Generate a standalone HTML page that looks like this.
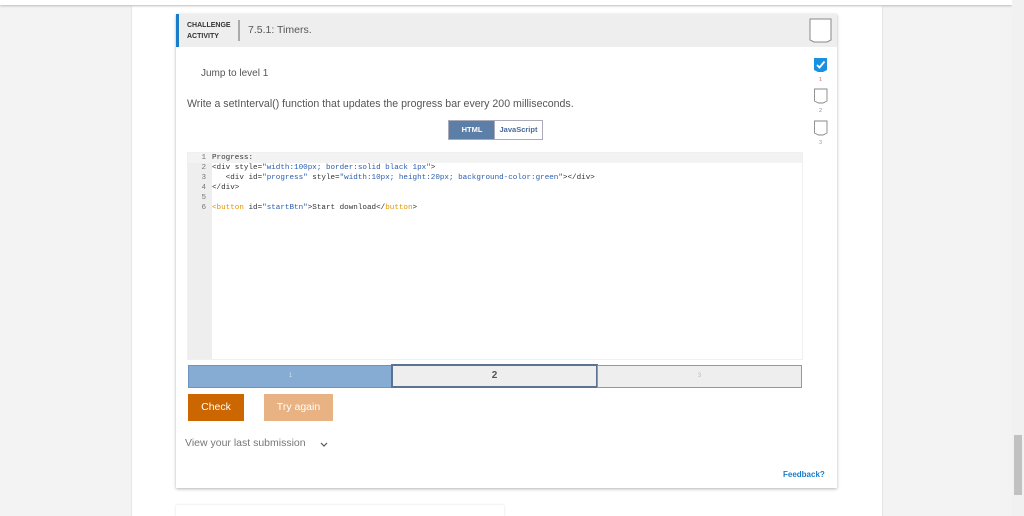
<!DOCTYPE html>
<html><head><style>
body{margin:0;width:1024px;height:516px;overflow:hidden;background:#f3f3f3;font-family:"Liberation Sans",sans-serif;position:relative}
.main{position:absolute;left:131px;top:0;width:750px;height:516px;background:#fff;border-left:1px solid #e6e6e6;border-right:1px solid #e6e6e6}
.topbar{position:absolute;left:0;top:0;width:1012px;height:5px;background:#fff;box-shadow:0 1px 2px #bbb}
.scroll{position:absolute;left:1012px;top:0;width:12px;height:516px;background:#f1f1f1}
.thumb{position:absolute;left:1014px;top:435px;width:8px;height:60px;background:#c1c1c1}
.card{position:absolute;left:176px;top:14px;width:661px;height:474px;background:#fff;box-shadow:0 1px 3px rgba(0,0,0,.3)}
.hdr{position:absolute;left:0;top:0;width:661px;height:33px;background:#eee}
.hdr .bl{position:absolute;left:0;top:0;width:3px;height:33px;background:#1a7bc8}
.ch{position:absolute;left:11px;top:6px;font-size:7px;font-weight:bold;color:#333;line-height:11px}
.sep{position:absolute;left:62px;top:6px;width:2px;height:21px;background:#aaa}
.tt{position:absolute;left:72px;top:10px;font-size:10.5px;color:#555}
.t{position:absolute;font-size:9.5px;color:#555;white-space:nowrap}
.code{position:absolute;left:11px;top:138px;width:614px;height:206px;background:#fff;border:1px solid #f0f0f0}
.gut{position:absolute;left:0;top:0;width:24px;height:206px;background:#eee}
.ln{position:absolute;left:0;width:614px;height:10px;font-family:"Liberation Mono",monospace;font-size:7.6px;color:#333;line-height:10px;white-space:pre}
.ln b{font-weight:normal;display:inline-block;width:18px;text-align:right;color:#777;margin-right:6px}
.s{color:#2a5db0}.o{color:#e39400}
.tab{position:absolute;top:106px;height:18px;font-size:7.5px;font-weight:bold;line-height:18px;text-align:center}
</style></head><body>
<div class="main"></div>
<div class="topbar"></div>
<div class="scroll"></div><div class="thumb"></div>
<div style="position:absolute;left:176px;top:505px;width:328px;height:11px;background:#fff;box-shadow:0 0 2px #ddd"></div>
<div class="card">
 <div class="hdr"><div class="bl"></div><div class="ch">CHALLENGE<br>ACTIVITY</div><div class="sep"></div><div class="tt">7.5.1: Timers.</div></div>
 <svg style="position:absolute;left:633px;top:4px" width="24" height="26"><path d="M1 1H22V22L18 24H5L1 22Z" fill="#fff" stroke="#888"/></svg>
 <div class="t" style="left:25px;top:54px;font-size:10px">Jump to level 1</div>
 <div class="t" style="left:11px;top:84px;font-size:10.6px">Write a setInterval() function that updates the progress bar every 200 milliseconds.</div>
 <div class="tab" style="left:272px;width:46px;background:#5b7fa6;color:#fff;border:1px solid #aab">HTML</div>
 <div class="tab" style="left:318px;width:47px;background:#fff;color:#4a6a9a;border:1px solid #aab">JavaScript</div>
 <div class="code"><div class="gut"></div>
  <div class="ln" style="top:0;background:#f3f3f3"><b>1</b>Progress:</div>
  <div class="ln" style="top:10px"><b>2</b>&lt;div style=<span class="s">"width:100px; border:solid black 1px"</span>&gt;</div>
  <div class="ln" style="top:20px"><b>3</b>   &lt;div id=<span class="s">"progress"</span> style=<span class="s">"width:10px; height:20px; background-color:green"</span>&gt;&lt;/div&gt;</div>
  <div class="ln" style="top:30px"><b>4</b>&lt;/div&gt;</div>
  <div class="ln" style="top:40px"><b>5</b></div>
  <div class="ln" style="top:50px"><b>6</b><span class="o">&lt;button</span> id=<span class="s">"startBtn"</span>&gt;Start download&lt;/<span class="o">button</span>&gt;</div>
 </div>
 <div style="position:absolute;left:12px;top:351px;width:203px;height:21px;background:#87acd3;border:1px solid #6e93be;color:#cfe0f0;font-size:6px;text-align:center;line-height:21px">1</div>
 <div style="position:absolute;left:215px;top:350px;width:203px;height:20px;background:#eee;border:2px solid #5b7291;color:#555;font-size:10px;font-weight:bold;text-align:center;line-height:20px">2</div>
 <div style="position:absolute;left:421px;top:351px;width:203px;height:21px;background:#eee;border:1px solid #7f9cc0;color:#bbb;font-size:6px;text-align:center;line-height:21px">3</div>
 <div style="position:absolute;left:12px;top:380px;width:56px;height:27px;background:#cc6600;color:#fff;font-size:10.5px;text-align:center;line-height:27px">Check</div>
 <div style="position:absolute;left:88px;top:380px;width:69px;height:27px;background:#e8b282;color:#fff;font-size:10.5px;text-align:center;line-height:27px">Try again</div>
 <div class="t" style="left:9px;top:423px;font-size:10.5px;color:#777">View your last submission</div>
 <svg style="position:absolute;left:144px;top:428px" width="8" height="6"><path d="M1 1L4 4L7 1" fill="none" stroke="#555" stroke-width="1.2"/></svg>
 <div class="t" style="left:607px;top:456px;font-size:8px;font-weight:bold;color:#1a7bc8">Feedback?</div>
 <svg style="position:absolute;left:637px;top:43px" width="16" height="100">
  <path d="M1 1H14V13L10 15H5L1 13Z" fill="#1a90e0"/><path d="M4 8L6.5 10.5L11.5 4.5" fill="none" stroke="#fff" stroke-width="1.8"/>
  <text x="7.5" y="24" font-size="5.5" fill="#c77" text-anchor="middle" font-family="Liberation Sans">1</text>
  <path d="M1.5 32H14V44L10 46H5.5L1.5 44Z" fill="#fff" stroke="#888" stroke-width=".9"/>
  <text x="7.5" y="55" font-size="5.5" fill="#88a" text-anchor="middle" font-family="Liberation Sans">2</text>
  <path d="M1.5 64H14V76L10 78H5.5L1.5 76Z" fill="#fff" stroke="#888" stroke-width=".9"/>
  <text x="7.5" y="87" font-size="5.5" fill="#999" text-anchor="middle" font-family="Liberation Sans">3</text>
 </svg>
</div>
</body></html>
